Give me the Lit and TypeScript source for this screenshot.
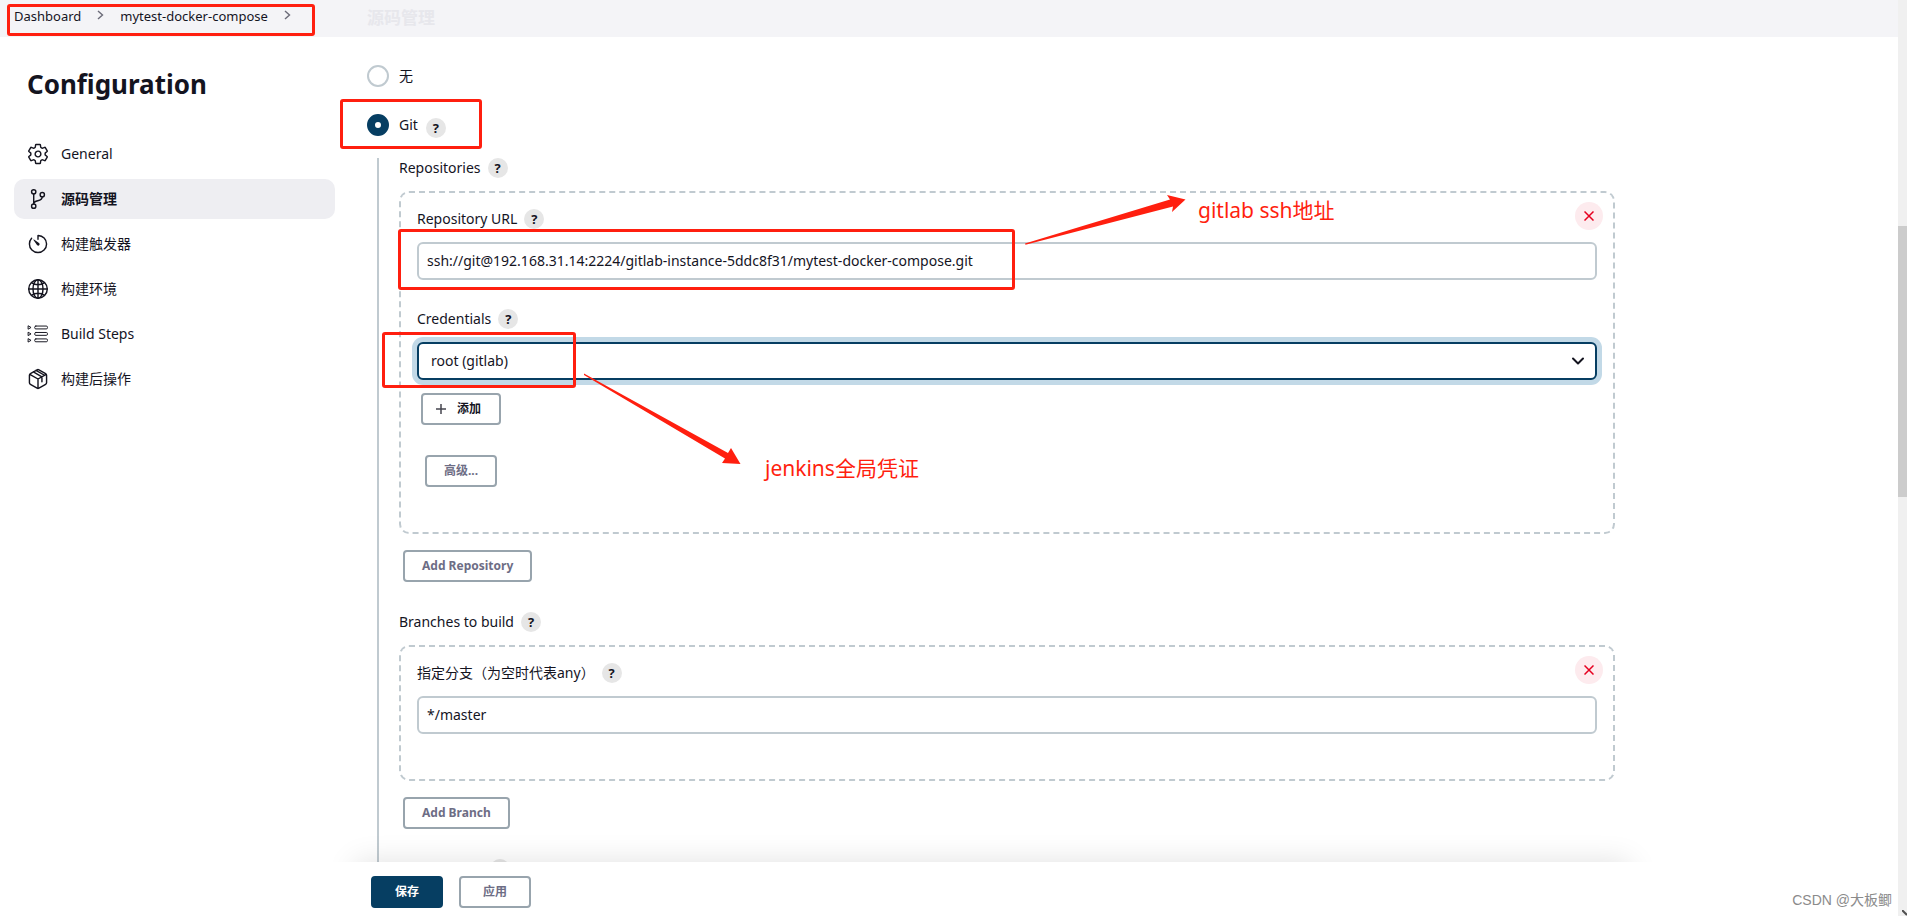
import { LitElement, html, css, svg } from "lit";
import { customElement, property } from "lit/decorators.js";
import { classMap } from "lit/directives/class-map.js";

const icons: Record<string, unknown> = {
  gear: svg`<path d="M262.29 192.31a64 64 0 1057.4 57.4 64.13 64.13 0 00-57.4-57.4zM416.39 256a154.34 154.34 0 01-1.53 20.79l45.21 35.46a10.81 10.81 0 012.45 13.75l-42.77 74a10.81 10.81 0 01-13.14 4.59l-44.9-18.08a16.11 16.11 0 00-15.17 1.75A164.48 164.48 0 01325 400.8a15.94 15.94 0 00-8.82 12.14l-6.73 47.89a11.08 11.08 0 01-10.68 9.17h-85.54a11.11 11.11 0 01-10.69-8.87l-6.72-47.82a16.07 16.07 0 00-9-12.22 155.3 155.3 0 01-21.46-12.57 16 16 0 00-15.11-1.71l-44.89 18.07a10.81 10.81 0 01-13.14-4.58l-42.77-74a10.8 10.8 0 012.45-13.75l38.21-30a16.05 16.05 0 006-14.08c-.36-4.17-.58-8.33-.58-12.5s.21-8.27.58-12.35a16 16 0 00-6.07-13.94l-38.19-30A10.81 10.81 0 0149.48 186l42.77-74a10.81 10.81 0 0113.14-4.59l44.9 18.08a16.11 16.11 0 0015.17-1.75A164.48 164.48 0 01187 111.2a15.94 15.94 0 008.82-12.14l6.73-47.89A11.08 11.08 0 01213.23 42h85.54a11.11 11.11 0 0110.69 8.87l6.72 47.82a16.07 16.07 0 009 12.22 155.3 155.3 0 0121.46 12.57 16 16 0 0015.11 1.71l44.89-18.07a10.81 10.81 0 0113.14 4.58l42.77 74a10.8 10.8 0 01-2.45 13.75l-38.21 30a16.05 16.05 0 00-6.05 14.08c.33 4.14.55 8.3.55 12.47z"/>`,
  branch: svg`<circle cx="160" cy="96" r="48"/><circle cx="160" cy="416" r="48"/><circle cx="352" cy="160" r="48"/><path d="M160 368V144M352 208c0 128-192 48-192 160"/>`,
  timer: svg`<path d="M112.91 128A191.85 191.85 0 0064 254c-1.18 106.35 85.65 193.8 192 194 106.2.2 192-85.83 192-192 0-104.54-83.55-189.61-187.5-192a4.36 4.36 0 00-4.5 4.37V152"/><path class="solid" d="M233.38 278.63l-79-113a8.13 8.13 0 0111.32-11.32l113 79a32.5 32.5 0 01-37.25 53.26 33.21 33.21 0 01-8.07-7.94z"/>`,
  globe: svg`<circle cx="256" cy="256" r="208"/><ellipse cx="256" cy="256" rx="112" ry="208"/><path d="M117.33 117.33c38.24 27.15 86.38 43.34 138.67 43.34s100.43-16.19 138.67-43.34M394.67 394.67c-38.24-27.15-86.38-43.34-138.67-43.34s-100.43 16.19-138.67 43.34M256 48v416M464 256H48"/>`,
  steps: svg`<g class="thin"><path d="M42 76l58 34-58 34zM42 220l58 34-58 34zM42 364l58 34-58 34z"/><rect x="182" y="78" width="286" height="64" rx="26"/><rect x="182" y="222" width="286" height="64" rx="26"/><rect x="182" y="366" width="286" height="64" rx="26"/></g>`,
  cube: svg`<path d="M448 341V171a43 43 0 00-22-37L277 49a43 43 0 00-42 0L86 134a43 43 0 00-22 37v170a43 43 0 0022 37l149 85a43 43 0 0042 0l149-85a43 43 0 0022-37zM72 150l184 106 184-106M256 470V256M152 96l192 110v110M210 62l192 110"/>`,
};

const icon = (name: string) => html`<svg class="icon" viewBox="32 32 448 448" aria-hidden="true">${icons[name]}</svg>`;

@customElement("help-button")
class HelpButton extends LitElement {
  @property() topic = "";
  static styles = css`
    :host { display: block; width: 20px; height: 20px; }
    button {
      display: block; width: 20px; height: 20px; padding: 0; border: 0; border-radius: 50%;
      background: #e6e6e6; color: #14141f; font: 700 13px/20px "Open Sans", "Noto Sans", sans-serif;
      text-align: center;
    }
  `;
  render() {
    return html`<button type="button" aria-label="Help: ${this.topic}">?</button>`;
  }
}

@customElement("app-root")
class AppRoot extends LitElement {
  static styles = css`
    :host {
      display: flex; position: relative; height: 100vh; overflow: hidden; background: #fff; color: #14141f;
      font: 14px/20px "Noto Sans", "Noto Sans CJK SC", sans-serif;
    }
    *, *::before { box-sizing: border-box; }
    button, input, select { font: inherit; color: inherit; margin: 0; }
    .page { flex: 1; min-width: 0; display: flex; flex-direction: column; }
    .icon { width: 20px; height: 20px; flex: none; overflow: visible; fill: none; stroke: currentColor; stroke-width: 32; stroke-linecap: round; stroke-linejoin: round; }
    .icon .solid { fill: currentColor; stroke: none; }
    .icon .thin { stroke-width: 22; }

    .top { flex: none; display: flex; height: 37px; background: #f4f4f7; }
    .crumbs { display: flex; width: 367px; padding: 6px 14px 0; gap: 16px; font-size: 13px; }
    .crumbs a { color: inherit; text-decoration: none; }
    .crumbs svg { width: 7px; height: 10px; margin-top: 4px; fill: none; stroke: #6b6b78; stroke-width: 1.4; }
    .ghost { margin: 0; padding-top: 6px; color: #e7e7ec; font-size: 17px; line-height: 24px; font-weight: 700; }

    .main { flex: 1; min-height: 0; display: flex; gap: 20px; padding-left: 14px; }
    .side { flex: none; width: 321px; }
    h1 { margin: 0; padding: 29px 13px 0; font-size: 26px; line-height: 36px; font-weight: 700; }
    nav { display: flex; flex-direction: column; gap: 5px; padding-top: 32px; }
    nav a { display: flex; align-items: center; gap: 13px; height: 40px; padding: 0 14px; border-radius: 10px; color: inherit; text-decoration: none; }
    nav a.active { background: #eeeef2; font-weight: 700; }

    .content { flex: 1; min-width: 0; max-width: 1275px; display: flex; flex-direction: column; }
    .form { flex: 1; min-height: 0; overflow: hidden; padding: 28px 15px 0 12px; }
    .choice { display: flex; align-items: center; height: 22px; margin-bottom: 27px; }
    .choice label { display: flex; align-items: center; gap: 10px; }
    .choice input { appearance: none; width: 22px; height: 22px; border: 2px solid #c0cad0; border-radius: 50%; }
    .choice input:checked { border: 8px solid #063e62; }
    .choice help-button { margin: 6px 0 0 8px; }
    .git { margin: -5px 0 0 10px; padding-left: 20px; border-left: 2px solid #c0cad0; }
    .label { display: flex; align-items: center; gap: 7px; height: 20px; margin-bottom: 13px; }
    .chunk { position: relative; margin-bottom: 16px; padding: 16px 16px 45px; border: 2px dashed #c0cad0; border-radius: 10px; }
    .chunk .label + * + .label { margin-top: 29px; }
    .text { display: block; width: 100%; height: 38px; padding: 0 8px 2px; border: 2px solid #c0cad0; border-radius: 6px; background: #fff; outline: 0; }
    .pick { position: relative; }
    .pick select { appearance: none; display: block; width: 100%; height: 38px; padding: 0 12px; border: 2px solid #063e62; border-radius: 6px; background: #fff; box-shadow: 0 0 0 5px #c2d9e7; outline: 0; }
    .pick svg { position: absolute; right: 12px; top: 12px; width: 14px; height: 14px; fill: none; stroke: #14141f; stroke-width: 2; stroke-linecap: round; stroke-linejoin: round; pointer-events: none; }
    .remove { position: absolute; top: 9px; right: 10px; width: 28px; height: 28px; padding: 9px; border: 0; border-radius: 50%; background: #fdebee; color: #e6001f; }
    .remove svg { display: block; width: 10px; height: 10px; stroke: currentColor; stroke-width: 1.5; }
    .btn { display: flex; align-items: center; justify-content: center; min-width: 72px; height: 32px; padding: 0 17px; border: 2px solid #98a4ad; border-radius: 4px; background: #fff; color: #6d6d85; font-size: 12px; line-height: 16px; font-weight: 700; }
    .btn.add { gap: 10px; margin: 13px 0 30px 4px; padding: 0 18px 0 12px; color: #14141f; }
    .btn.add svg { width: 12px; height: 12px; stroke: #45454f; stroke-width: 1.5; }
    .btn.more { margin-left: 8px; }
    .btn.next { margin: 0 0 30px 4px; }

    .bar { position: relative; flex: none; display: flex; gap: 16px; padding: 14px 16px 8px; background: #fff; }
    .bar::before { content: ""; position: absolute; inset: 0; box-shadow: 0 0 30px rgba(0, 0, 0, .12); clip-path: inset(-40px -40px 100% -40px); pointer-events: none; }
    .bar .save { background: #063e62; border-color: #063e62; color: #fff; }

    .scroll { flex: none; width: 9px; padding-top: 226px; background: #f0f0f0; position: relative; }
    .thumb { height: 271px; background: #ccc; }
    .scroll svg { position: absolute; right: 0; bottom: 0; width: 5px; height: 6px; fill: none; stroke: #505050; stroke-width: 2; }

    .notes { position: absolute; inset: 0; pointer-events: none; color: #ff1f0f; font-size: 21px; line-height: 30px; }
    .notes > * { position: absolute; }
    .notes svg { left: 0; top: 0; width: 100%; height: 100%; fill: currentColor; }
    .frame { border: 3px solid currentColor; border-radius: 3px; }
    .f1 { left: 7px; top: 4px; width: 308px; height: 32px; }
    .f2 { left: 340px; top: 99px; width: 142px; height: 50px; }
    .f3 { left: 398px; top: 229px; width: 617px; height: 61px; }
    .f4 { left: 382px; top: 332px; width: 194px; height: 56px; }
    .n1 { left: 1198px; top: 195px; }
    .n2 { left: 765px; top: 453px; }
    .credit { position: absolute; right: 15px; bottom: 6px; color: #8b8b8b; font: 14px/20px "Liberation Sans", "Noto Sans CJK SC", sans-serif; }
  `;

  nav = [
    ["gear", "General"], ["branch", "源码管理"], ["timer", "构建触发器"],
    ["globe", "构建环境"], ["steps", "Build Steps"], ["cube", "构建后操作"],
  ];

  chevron() {
    return html`<svg viewBox="0 0 7 10" aria-hidden="true"><path d="M1 1l4.500 4L1 9"/></svg>`;
  }
  remove(what: string) {
    return html`<button class="remove" type="button" aria-label=${what}><svg viewBox="0 0 10 10"><path d="M.5 .5l9 9M9.5 .5l-9 9"/></svg></button>`;
  }

  render() {
    return html`
      <div class="page">
        <header class="top">
          <div class="crumbs">
            <a href="#">Dashboard</a>${this.chevron()}<a href="#">mytest-docker-compose</a>${this.chevron()}
          </div>
          <h2 class="ghost">源码管理</h2>
        </header>
        <div class="main">
          <aside class="side">
            <h1>Configuration</h1>
            <nav>
              ${this.nav.map(([name, text], i) => html`<a href="#" class=${classMap({ active: i === 1 })}>${icon(name)}<span>${text}</span></a>`)}
            </nav>
          </aside>
          <div class="content">
            <div class="form">
              <div class="choice"><label><input type="radio" name="scm">无</label></div>
              <div class="choice"><label><input type="radio" name="scm" checked>Git</label><help-button topic="Git"></help-button></div>
              <div class="git">
                <div class="label"><span>Repositories</span><help-button topic="Repositories"></help-button></div>
                <div class="chunk">
                  ${this.remove("Delete repository")}
                  <div class="label"><label for="url">Repository URL</label><help-button topic="Repository URL"></help-button></div>
                  <input class="text" id="url" value="ssh://git@192.168.31.14:2224/gitlab-instance-5ddc8f31/mytest-docker-compose.git">
                  <div class="label"><label for="cred">Credentials</label><help-button topic="Credentials"></help-button></div>
                  <div class="pick">
                    <select id="cred"><option>root (gitlab)</option></select>
                    <svg viewBox="0 0 14 14" aria-hidden="true"><path d="M2 4.5l5 5 5-5"/></svg>
                  </div>
                  <button class="btn add" type="button"><svg viewBox="0 0 12 12" aria-hidden="true"><path d="M6 1v10M1 6h10"/></svg>添加</button>
                  <button class="btn more" type="button">高级...</button>
                </div>
                <button class="btn next" type="button">Add Repository</button>
                <div class="label"><span>Branches to build</span><help-button topic="Branches to build"></help-button></div>
                <div class="chunk">
                  ${this.remove("Delete branch")}
                  <div class="label"><label for="branch">指定分支（为空时代表any）</label><help-button topic="Branch"></help-button></div>
                  <input class="text" id="branch" value="*/master">
                </div>
                <button class="btn next" type="button">Add Branch</button>
                <div class="label"><span>源码库浏览器</span><help-button topic="源码库浏览器"></help-button></div>
              </div>
            </div>
            <footer class="bar">
              <button class="btn save" type="submit">保存</button>
              <button class="btn" type="button">应用</button>
            </footer>
          </div>
        </div>
      </div>
      <div class="scroll" aria-hidden="true">
        <div class="thumb"></div>
        <svg viewBox="0 0 5 6"><path d="M0 0l5 5"/></svg>
      </div>
      <div class="notes">
        <svg aria-hidden="true">
          <path d="M1025 243.500L1170 199.500 1167 195 1185.500 199.500 1172 212 1173 206.500 1025.500 244.800z"/>
          <path d="M584 373.500L728 453 731 448 740.500 464 722 463 725 458.500 584 375z"/>
        </svg>
        <div class="frame f1"></div><div class="frame f2"></div><div class="frame f3"></div><div class="frame f4"></div>
        <span class="n1">gitlab ssh地址</span>
        <span class="n2">jenkins全局凭证</span>
      </div>
      <div class="credit">CSDN @大板鲫</div>
    `;
  }
}
